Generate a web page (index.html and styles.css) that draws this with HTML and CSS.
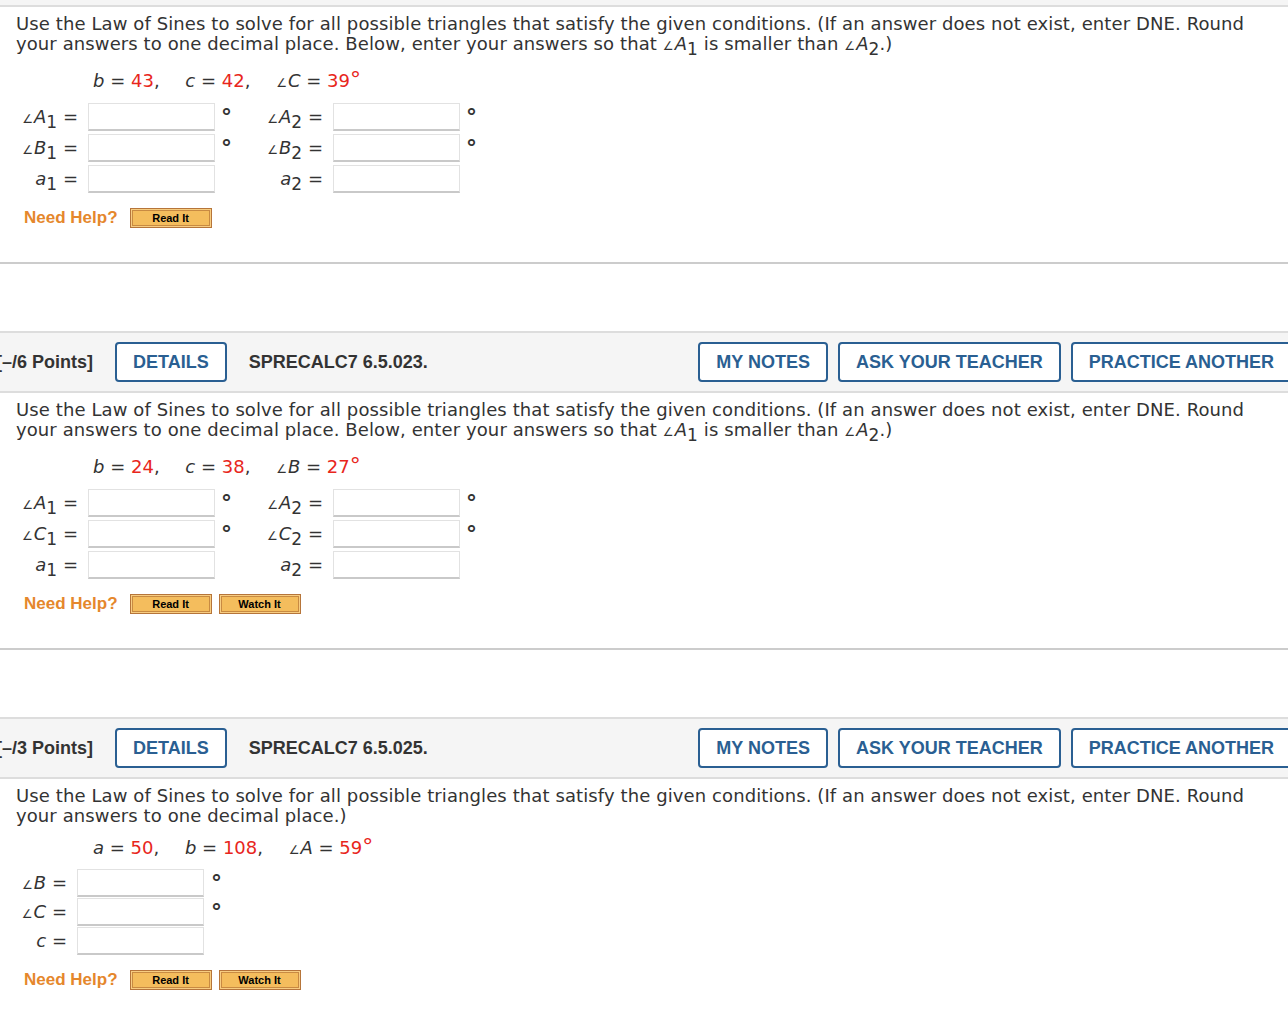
FILE: index.html
```html
<!DOCTYPE html>
<html lang="en">
<head>
    <meta charset="UTF-8">
    <title>SPRECALC7 Law of Sines</title>
    <link rel="stylesheet" href="styles.css">
</head>
<body>
    <div class="page">
        <!-- tail of the previous question header -->
        <div class="q-header-stub"></div>

        <div class="question">
            <p class="prompt">Use the Law of Sines to solve for all possible triangles that satisfy the given conditions. (If an answer does not exist, enter DNE. Round<br>your answers to one decimal place. Below, enter your answers so that <span class="ang">&ang;</span><i>A</i><sub>1</sub> is smaller than <span class="ang">&ang;</span><i>A</i><sub>2</sub>.)</p>
            <div class="given">
                <span class="term"><i>b</i> = <span class="val">43</span>,</span>
                <span class="term"><i>c</i> = <span class="val">42</span>,</span>
                <span class="term"><span class="ang">&ang;</span><i>C</i> = <span class="val">39<span class="dg">&deg;</span></span></span>
            </div>
            <div class="answers">
                <label class="lbl"><span class="ang">&ang;</span><i>A</i><sub>1</sub> =</label>
                <input class="ans" type="text">
                <span class="deg">&deg;</span>
                <label class="lbl"><span class="ang">&ang;</span><i>A</i><sub>2</sub> =</label>
                <input class="ans" type="text">
                <span class="deg">&deg;</span>

                <label class="lbl"><span class="ang">&ang;</span><i>B</i><sub>1</sub> =</label>
                <input class="ans" type="text">
                <span class="deg">&deg;</span>
                <label class="lbl"><span class="ang">&ang;</span><i>B</i><sub>2</sub> =</label>
                <input class="ans" type="text">
                <span class="deg">&deg;</span>

                <label class="lbl"><i>a</i><sub>1</sub> =</label>
                <input class="ans" type="text">
                <span class="deg"></span>
                <label class="lbl"><i>a</i><sub>2</sub> =</label>
                <input class="ans" type="text">
                <span class="deg"></span>
            </div>
            <div class="help">
                <span class="help-label">Need Help?</span>
                <button class="help-btn">Read It</button>
            </div>
        </div>

        <div class="q-header">
            <span class="points">[&ndash;/6 Points]</span>
            <button class="hdr-btn">DETAILS</button>
            <span class="q-id">SPRECALC7 6.5.023.</span>
            <div class="hdr-right">
                <button class="hdr-btn">MY NOTES</button>
                <button class="hdr-btn">ASK YOUR TEACHER</button>
                <button class="hdr-btn">PRACTICE ANOTHER</button>
            </div>
        </div>

        <div class="question">
            <p class="prompt">Use the Law of Sines to solve for all possible triangles that satisfy the given conditions. (If an answer does not exist, enter DNE. Round<br>your answers to one decimal place. Below, enter your answers so that <span class="ang">&ang;</span><i>A</i><sub>1</sub> is smaller than <span class="ang">&ang;</span><i>A</i><sub>2</sub>.)</p>
            <div class="given">
                <span class="term"><i>b</i> = <span class="val">24</span>,</span>
                <span class="term"><i>c</i> = <span class="val">38</span>,</span>
                <span class="term"><span class="ang">&ang;</span><i>B</i> = <span class="val">27<span class="dg">&deg;</span></span></span>
            </div>
            <div class="answers">
                <label class="lbl"><span class="ang">&ang;</span><i>A</i><sub>1</sub> =</label>
                <input class="ans" type="text">
                <span class="deg">&deg;</span>
                <label class="lbl"><span class="ang">&ang;</span><i>A</i><sub>2</sub> =</label>
                <input class="ans" type="text">
                <span class="deg">&deg;</span>

                <label class="lbl"><span class="ang">&ang;</span><i>C</i><sub>1</sub> =</label>
                <input class="ans" type="text">
                <span class="deg">&deg;</span>
                <label class="lbl"><span class="ang">&ang;</span><i>C</i><sub>2</sub> =</label>
                <input class="ans" type="text">
                <span class="deg">&deg;</span>

                <label class="lbl"><i>a</i><sub>1</sub> =</label>
                <input class="ans" type="text">
                <span class="deg"></span>
                <label class="lbl"><i>a</i><sub>2</sub> =</label>
                <input class="ans" type="text">
                <span class="deg"></span>
            </div>
            <div class="help">
                <span class="help-label">Need Help?</span>
                <button class="help-btn">Read It</button>
                <button class="help-btn">Watch It</button>
            </div>
        </div>

        <div class="q-header">
            <span class="points">[&ndash;/3 Points]</span>
            <button class="hdr-btn">DETAILS</button>
            <span class="q-id">SPRECALC7 6.5.025.</span>
            <div class="hdr-right">
                <button class="hdr-btn">MY NOTES</button>
                <button class="hdr-btn">ASK YOUR TEACHER</button>
                <button class="hdr-btn">PRACTICE ANOTHER</button>
            </div>
        </div>

        <div class="question last">
            <p class="prompt">Use the Law of Sines to solve for all possible triangles that satisfy the given conditions. (If an answer does not exist, enter DNE. Round<br>your answers to one decimal place.)</p>
            <div class="given">
                <span class="term"><i>a</i> = <span class="val">50</span>,</span>
                <span class="term"><i>b</i> = <span class="val">108</span>,</span>
                <span class="term"><span class="ang">&ang;</span><i>A</i> = <span class="val">59<span class="dg">&deg;</span></span></span>
            </div>
            <div class="answers single">
                <label class="lbl"><span class="ang">&ang;</span><i>B</i> =</label>
                <input class="ans" type="text">
                <span class="deg">&deg;</span>

                <label class="lbl"><span class="ang">&ang;</span><i>C</i> =</label>
                <input class="ans" type="text">
                <span class="deg">&deg;</span>

                <label class="lbl"><i>c</i> =</label>
                <input class="ans" type="text">
                <span class="deg"></span>
            </div>
            <div class="help">
                <span class="help-label">Need Help?</span>
                <button class="help-btn">Read It</button>
                <button class="help-btn">Watch It</button>
            </div>
        </div>
    </div>
</body>
</html>
```

FILE: styles.css
```css
* {
    margin: 0;
    padding: 0;
    box-sizing: border-box;
}

body {
    background-color: #fff;
    color: #333;
    font-family: 'DejaVu Sans', Verdana, sans-serif;
    font-size: 18px;
    overflow: hidden;
}

.page {
    width: 100%;
}

/* Question header bar */
.q-header-stub {
    height: 7px;
    background-color: #f5f5f5;
    border-bottom: 2px solid #ddd;
}

.q-header {
    display: flex;
    align-items: center;
    margin-right: -4px;
    padding: 9px 0;
    background-color: #f5f5f5;
    border-top: 2px solid #ddd;
    border-bottom: 2px solid #ddd;
    font-family: 'Liberation Sans', Arial, sans-serif;
}

.points {
    margin-left: -4px;
    font-size: 18px;
    font-weight: 700;
    color: #333;
}

.q-id {
    margin-left: 22px;
    font-size: 18px;
    font-weight: 700;
    color: #333;
}

.hdr-btn {
    height: 40px;
    padding: 0 16px;
    background-color: #fff;
    border: 2px solid #2a5f92;
    border-radius: 4px;
    color: #2a5f92;
    font-family: 'Liberation Sans', Arial, sans-serif;
    font-size: 18px;
    font-weight: 700;
    cursor: pointer;
}

.points + .hdr-btn {
    margin-left: 22px;
}

.hdr-right {
    display: flex;
    gap: 10px;
    margin-left: auto;
}

/* Question body */
.question {
    padding: 7px 16px 0;
    border-bottom: 2px solid #ccc;
    margin-bottom: 67px;
}

.question.last {
    border-bottom: none;
    margin-bottom: 0;
}

.prompt {
    line-height: 20px;
    letter-spacing: 0.1px;
    white-space: nowrap;
}

.ang {
    font-size: 12px;
    line-height: 0;
    margin-right: 1px;
}

i {
    font-style: italic;
}

sub {
    font-size: 17px;
    line-height: 0;
    vertical-align: -5px;
}

.dg {
    font-size: 22px;
    line-height: 0;
}

.given {
    margin: 17px 0 0 77px;
    line-height: 20px;
}

.last .given {
    margin-top: 12px;
}

.term {
    margin-right: 20px;
}

.val {
    color: #e8261c;
}

.answers {
    display: grid;
    grid-template-columns: 72px 127px 40px 78px 127px 20px;
    row-gap: 3px;
    align-items: center;
    margin-top: 12px;
    line-height: 20px;
}

.answers.single {
    grid-template-columns: 61px 127px 20px;
    row-gap: 1px;
    margin-top: 11px;
}

.lbl {
    padding-right: 10px;
    text-align: right;
    white-space: nowrap;
}

.ans {
    width: 127px;
    height: 28px;
    border: 1px solid #e2e2e2;
    border-bottom: 2px solid #c9c9c9;
    background-color: #fff;
}

.deg {
    padding-left: 6px;
    font-size: 22px;
    font-weight: 700;
    line-height: 22px;
}

.single .deg {
    padding-left: 7px;
}

.help {
    display: flex;
    align-items: center;
    gap: 7px;
    margin: 15px 0 0 8px;
    padding-bottom: 34px;
}

.last .help {
    margin-top: 15px;
}

.help-label {
    margin-right: 5px;
    color: #e5872c;
    font-family: 'Liberation Sans', Arial, sans-serif;
    font-size: 17px;
    font-weight: 700;
}

.help-btn {
    width: 82px;
    height: 20px;
    border: 1px solid #b6753a;
    background-color: #f4bd5d;
    box-shadow: inset 0 0 0 1px #f7cd82, inset 0 0 0 2px #c88a42;
    color: #000;
    font-family: 'Liberation Sans', Arial, sans-serif;
    font-size: 11px;
    font-weight: 700;
    cursor: pointer;
}
```
